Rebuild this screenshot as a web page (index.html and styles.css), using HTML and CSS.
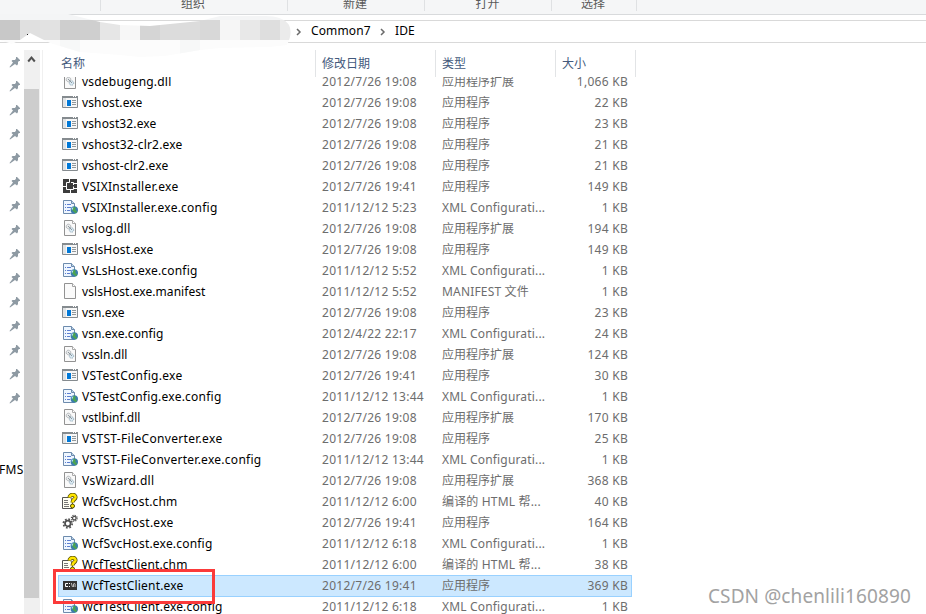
FILE: index.html
```html
<!DOCTYPE html>
<html lang="zh-CN">
<head>
<meta charset="utf-8">
<title>IDE</title>
<link rel="stylesheet" href="styles.css">
</head>
<body>
<svg class="defs" aria-hidden="true">
  <symbol id="pin" viewBox="0 0 12 12"><path fill="#8e9aa3" d="M7 1h1l3 3v1h-1L9 6v2L8 9.500 6 8 1 11.500.5 11 4 6.500 2.500 5l1-1H6l1-1.500z"/></symbol>
  <symbol id="dll" viewBox="0 0 16 16"><path fill="#fafafa" stroke="#929292" d="M2.500.5h8l3 3v12h-11z"/><path fill="#fff" stroke="#aaa" d="M10.500.5v3h3"/><circle cx="6.500" cy="6.500" r="2.300" fill="#e8eaeb" stroke="#9aa0a4" stroke-dasharray="1 .6"/><circle cx="9.500" cy="10" r="2.200" fill="#d9e9f2" stroke="#91a9b8" stroke-dasharray="1 .6"/><path stroke="#8c979e" d="M6 6l4 4"/></symbol>
  <symbol id="exe" viewBox="0 0 16 16"><path fill="#f7f7f7" stroke="#858b8f" d="M.5 2.500h15v11H.5z"/><path fill="#858b8f" d="M0 2h16v2H0z"/><path fill="#fff" d="M11 2h1v1h-1zM13 2h1v1h-1z"/><path fill="#dfe2e4" d="M1 4h3v9H1z"/><path fill="#0078d7" d="M5 6h4v6H5z"/><path stroke="#90979b" d="M10 6.500h4M10 8.500h4M10 10.500h4"/></symbol>
  <symbol id="vsix" viewBox="0 0 16 16"><path fill="#3c3c3c" d="M1 1h14v14H1z"/><path fill="none" stroke="#fff" d="M7.500 1v3.500H4.500v7h7v-3M9 4.500h2.500V7M11 5.500h4M1 8.500h3M8.500 12v3M12 10.500h3"/></symbol>
  <symbol id="config" viewBox="0 0 16 16"><path fill="#eef6ff" stroke="#6d8bad" d="M1.500 1.500h8l3 3v10h-11z"/><path fill="#bcd3e8" stroke="#6d8bad" d="M9.500 1.500v3h3"/><path stroke="#5c7fd0" d="M3 5.500h1M5 5.500h4M3 8.500h1M5 8.500h4M3 11.500h1M5 11.500h3"/><circle cx="12.300" cy="11" r="3.700" fill="#3a7cae"/><path fill="#4ca44f" d="M12 7.500l2 1.500-1 2 2 1-1 2.500-2-1.500-2-2 1-2z"/><path fill="#b5dcf2" d="M9.500 9.500l1.700-1.500-.2 2-1 1z"/></symbol>
  <symbol id="file" viewBox="0 0 16 16"><path fill="#fafafa" stroke="#929292" d="M2.500.5h8l3 3v12h-11z"/><path fill="#fff" stroke="#a5a5a5" d="M10.500.5v3h3"/></symbol>
  <symbol id="chm" viewBox="0 0 16 16"><path fill="#fffef2" stroke="#555" d="M.5 4.500h8l2 3v8H.5z"/><path stroke="#777" d="M2 7.500h4M2 9.500h4M2 11.500h5M2 13.500h5"/><path fill="none" stroke="#4d4700" stroke-width="4" d="M7.500 4.500c0-3.500 6.500-3.500 6 0C13 7 10.500 6.500 10.500 9.500"/><path fill="none" stroke="#ffe500" stroke-width="2.600" d="M7.500 4.500c0-3.500 6.500-3.500 6 0C13 6.500 10.500 6.500 10.500 9.500"/><circle cx="10.500" cy="13" r="2" fill="#ffe500" stroke="#4d4700"/></symbol>
  <symbol id="gear" viewBox="0 0 16 16"><circle cx="5.800" cy="9.500" r="2.800" fill="none" stroke="#505050" stroke-width="1.800"/><circle cx="5.800" cy="9.500" r="4.400" fill="none" stroke="#505050" stroke-width="1.700" stroke-dasharray="1.730 1.730"/><circle cx="12.300" cy="4.200" r="1.800" fill="none" stroke="#505050" stroke-width="1.300"/><circle cx="12.300" cy="4.200" r="2.900" fill="none" stroke="#505050" stroke-width="1.200" stroke-dasharray="1.140 1.140"/></symbol>
  <symbol id="console" viewBox="0 0 16 16"><path fill="#343434" d="M1 4h14v9H1z"/><path fill="none" stroke="#fff" d="M6 6.500H3.500v3H6M7.500 6v1M7.500 9v1"/><path fill="none" stroke="#ddd" stroke-width=".8" d="M9.300 6l1.200 4M11.500 10V7l.8-.8.8.8v3"/></symbol>
</svg>
<div class="window">
  <div class="ribbon"><span class="g1">组织</span><span class="g2">新建</span><span class="g3">打开</span><span class="g4">选择</span></div>
  <div class="address">
    <svg class="chev" viewBox="0 0 6 8"><path d="M1 1l3 3-3 3"/></svg><span class="common">Common7</span>
    <svg class="chev" viewBox="0 0 6 8"><path d="M1 1l3 3-3 3"/></svg><span>IDE</span>
  </div>
  <svg class="mosaic" viewBox="0 0 300 60">
    <defs><clipPath id="brush"><path d="M0 14H68L84 18 100 22 120 25 150 26 180 23 200 21 220 16H265Q283 16 289 25 293 33 287 45L270 47 220 48 200 50 165 56 140 57 120 55 80 52 50 43 30 33 20 40 12 44 0 40Z"/></clipPath></defs>
    <g clip-path="url(#brush)" shape-rendering="crispEdges"><path fill="#fcfcfc" d="M0 40h300v20H0z"/><path fill="#f4f5f6" d="M0 13h300v7H0z"/><path fill="#f7f8f8" d="M60 40h20v20H60zM180 40h20v15h-20z"/><g id="cells"></g></g>
    <path fill="#222" d="M27 34h1v1h-1z"/>
  </svg>
  <div class="content">
    <div class="nav"><div class="pins" id="pins"></div><span class="tree">FMS</span></div>
    <div class="scroll"><svg viewBox="0 0 16 39"><path d="M4.200 11.500L7.500 7.500l3.300 4"/></svg><div class="thumb"></div></div>
    <div class="divider"></div>
    <div class="files">
      <div class="head"><span class="first">名称</span><span>修改日期</span><span>类型</span><span>大小</span></div>
      <div class="clip"><div class="list" id="list"></div></div>
    </div>
  </div>
  <div class="marker"></div>
  <div class="watermark">CSDN @chenlili160890</div>
</div>
<script src="app.js"></script>
</body>
</html>
```
FILE: styles.css
```css
* { box-sizing: border-box; }
body { margin: 0; background: #fff; font: 12px/21px "Noto Sans", "Noto Sans CJK SC", sans-serif; color: #000; }
.defs { position: absolute; width: 0; height: 0; }
.window { position: relative; width: 926px; height: 614px; overflow: hidden; display: flex; flex-direction: column; }
.ribbon { height: 15px; background: #f5f6f7; border-bottom: 1px solid #d8dadc; display: flex; color: #5a5a5a; flex: none; }
.ribbon span { height: 11px; line-height: 7px; border-right: 1px solid #dfe1e3; text-align: center; }
.ribbon .g1 { width: 288px; padding-left: 99px; background: linear-gradient(#dfe1e3, #dfe1e3) 100px 0 / 1px 11px no-repeat; }
.ribbon .g2 { width: 137px; padding-right: 2px; }
.ribbon .g3 { width: 127px; padding-right: 1px; }
.ribbon .g4 { width: 85px; padding-right: 2px; }
.address { flex: none; height: 23px; margin-top: 5px; border: solid #d9d9d9; border-width: 1px 0; display: flex; align-items: center; padding-left: 296px; }
.address span { margin: -2px 8px 0 9px; line-height: 20px; letter-spacing: .12px; }
.address .common { width: 61px; }
.chev { width: 6px; height: 8px; fill: none; stroke: #6b6b6b; stroke-width: 1.5; }
.mosaic { position: absolute; left: 0; top: 0; width: 300px; height: 60px; }
.content { display: flex; flex: 1; min-height: 0; padding-top: 7px; }
.nav { width: 24px; flex: none; }
.pins { display: grid; grid-auto-rows: 24px; padding-left: 9px; align-items: center; }
.pins svg { width: 12px; height: 12px; display: block; }
.tree { display: block; margin: 49px 0 0 -1px; white-space: nowrap; letter-spacing: .3px; }
.scroll { width: 16px; background: #f0f0f0; flex: none; }
.scroll svg { display: block; width: 16px; height: 39px; fill: none; stroke: #505050; stroke-width: 2; }
.thumb { width: 15px; height: 509px; background: #cdcdcd; }
.divider { width: 1px; margin-left: 2px; background: #f0f0f0; }
.files { width: 593px; margin-left: 13px; display: flex; flex-direction: column; }
.head { display: grid; grid-template-columns: 260px 120px 120px 80px; height: 27px; line-height: 27px; color: #43597c; flex: none; }
.head span { border-right: 1px solid #e2e4e6; padding-left: 6px; }
.head .first { padding-left: 5px; }
.clip { flex: 1; min-height: 0; overflow: hidden; margin-left: 2px; }
.list { margin-top: -6px; }
.row { display: grid; grid-template-columns: 24px 240px 120px 186px; height: 21px; width: 574px; color: #6d6d6d; white-space: nowrap; }
.row svg { width: 16px; height: 16px; margin: 2px 0 0 4px; }
.row .name { color: #000; justify-self: start; }
.row .date { letter-spacing: .27px; }
.row .info { display: flex; justify-content: space-between; }
.row .latin { letter-spacing: .17px; }
.row .size { letter-spacing: .27px; }
.row.selected { background: #cce8ff; box-shadow: inset 0 0 0 1px #99d1ff; height: 22px; margin-bottom: -1px; }
.marker { position: absolute; left: 53px; top: 569px; width: 162px; height: 35px; border: 3px solid #fb3a3a; }
.watermark { position: absolute; left: 708px; top: 584px; font-size: 19px; line-height: 24px; letter-spacing: .1px; color: #a2a2a2; white-space: nowrap; }
```
FILE: app.js
```js
const app = "应用程序", dll = "应用程序扩展", xml = "XML Configurati...", chm = "编译的 HTML 帮...";
// icon, name, date, type, size in KB, width of the name
const rows = [
  ["dll", "vsdebugeng.dll", "2012/7/26 19:08", dll, "1,066", 89],
  ["exe", "vshost.exe", "2012/7/26 19:08", app, 22, 60],
  ["exe", "vshost32.exe", "2012/7/26 19:08", app, 23, 74],
  ["exe", "vshost32-clr2.exe", "2012/7/26 19:08", app, 21, 100],
  ["exe", "vshost-clr2.exe", "2012/7/26 19:08", app, 21, 86],
  ["vsix", "VSIXInstaller.exe", "2012/7/26 19:41", app, 149, 96],
  ["config", "VSIXInstaller.exe.config", "2011/12/12 5:23", xml, 1, 135],
  ["dll", "vslog.dll", "2012/7/26 19:08", dll, 194, 48],
  ["exe", "vslsHost.exe", "2012/7/26 19:08", app, 149, 71],
  ["config", "VsLsHost.exe.config", "2011/12/12 5:52", xml, 1, 115],
  ["file", "vslsHost.exe.manifest", "2011/12/12 5:52", "MANIFEST 文件", 1, 123],
  ["exe", "vsn.exe", "2012/7/26 19:08", app, 23, 42],
  ["config", "vsn.exe.config", "2012/4/22 22:17", xml, 24, 81],
  ["dll", "vssln.dll", "2012/7/26 19:08", dll, 124, 45],
  ["exe", "VSTestConfig.exe", "2012/7/26 19:41", app, 30, 100],
  ["config", "VSTestConfig.exe.config", "2011/12/12 13:44", xml, 1, 139],
  ["dll", "vstlbinf.dll", "2012/7/26 19:08", dll, 170, 58],
  ["exe", "VSTST-FileConverter.exe", "2012/7/26 19:08", app, 25, 140],
  ["config", "VSTST-FileConverter.exe.config", "2011/12/12 13:44", xml, 1, 179],
  ["dll", "VsWizard.dll", "2012/7/26 19:08", dll, 368, 72],
  ["chm", "WcfSvcHost.chm", "2011/12/12 6:00", chm, 40, 95],
  ["gear", "WcfSvcHost.exe", "2012/7/26 19:41", app, 164, 91],
  ["config", "WcfSvcHost.exe.config", "2011/12/12 6:18", xml, 1, 130],
  ["chm", "WcfTestClient.chm", "2011/12/12 6:00", chm, 38, 105],
  ["console", "WcfTestClient.exe", "2012/7/26 19:41", app, 369, 101],
  ["config", "WcfTestClient.exe.config", "2011/12/12 6:18", xml, 1, 140]
];
document.getElementById("list").innerHTML = rows.map(([icon, name, date, type, size], i) =>
  `<div class="row${i === 24 ? " selected" : ""}"><svg><use href="#${icon}"/></svg><span class="name">${name}</span><span class="date">${date}</span><span class="info"><span class="${/[A-Z]/.test(type) ? "latin" : ""}">${type}</span><span class="size">${size} KB</span></span></div>`).join("");
document.querySelectorAll(".name").forEach((el, i) => {
  const gap = (rows[i][5] + 0.5 - el.getBoundingClientRect().width) / rows[i][1].length;
  el.style.letterSpacing = gap.toFixed(3) + "px";
});
document.getElementById("pins").innerHTML = '<svg><use href="#pin"/></svg>'.repeat(15);
const cells = ["c8c8c8", "e0e0e0", "e2e2e2", "cecece", "cfcfcf", "e6e6e6", "f7f7f7", "d5d5d5", "dcdcdc", "dcdcdc", "d8d8d8", "f6f6f6", "e8e8e8", "dedede", "ebebeb"];
document.getElementById("cells").innerHTML = cells.map((c, i) => `<path fill="#${c}" d="M${i * 20} 20h20v20h-20z"/>`).join("");
```
